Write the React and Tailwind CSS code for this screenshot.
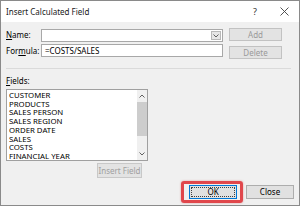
import React from 'react';

const fields = [
  'CUSTOMER',
  'PRODUCTS',
  'SALES PERSON',
  'SALES REGION',
  'ORDER DATE',
  'SALES',
  'COSTS',
  'FINANCIAL YEAR'
];

const Chevron = ({ up }) => (
  <svg width="6" height="4" viewBox="0 0 6 4" className="block">
    <path d={up ? 'M0.5 3.5 L3 1 L5.5 3.5' : 'M0.5 0.5 L3 3 L5.5 0.5'} fill="none" stroke="#606060" strokeWidth="1" />
  </svg>
);

const App = () => {
  return (
    <div
      className="w-[300px] h-[206px] flex flex-col bg-[#f0f0f0] border border-[#8a8a8a] text-[8px] text-black overflow-hidden"
      style={{ fontFamily: '"Noto Sans", "Open Sans", sans-serif' }}
    >
      {/* Title bar */}
      <div className="h-[21px] bg-white flex items-center pl-[5px] pr-[10px]">
        <span className="flex-1 text-[8px] text-[#202020]">Insert Calculated Field</span>
        <span className="w-[10px] text-center text-[9px] mr-[20px] text-[#303030]">?</span>
        <svg width="9" height="9" viewBox="0 0 9 9">
          <path d="M0.5 0.5 L8.5 8.5 M8.5 0.5 L0.5 8.5" stroke="#404040" strokeWidth="0.9" />
        </svg>
      </div>

      {/* Body */}
      <div className="flex-1 flex flex-col px-[5px] pt-[6px]">
        <div className="flex items-start h-[14px]">
          <span className="w-[35px] leading-[14px]">
            <span className="underline">N</span>ame:
          </span>
          <div className="w-[182px] h-[13px] mt-[1px] bg-white border border-[#a8a8a8] flex justify-end p-[1px]">
            <div className="w-[10px] h-full bg-[#e6e6e6] border border-[#b8b8b8] flex items-center justify-center">
              <Chevron />
            </div>
          </div>
          <button className="ml-[6px] w-[53px] h-[13px] bg-[#e3e3e3] border border-[#c2c2c2] text-[#9a9a9a] text-[8px] leading-none">
            Add
          </button>
        </div>
        <div className="flex items-start h-[16px] mt-[2px]">
          <span className="w-[35px] leading-[13px]">
            For<span className="underline">m</span>ula:
          </span>
          <div className="w-[182px] h-[13px] bg-white border border-[#a8a8a8] flex items-center px-[3px]">
            =COSTS/SALES
          </div>
          <button className="ml-[6px] mt-[2px] w-[53px] h-[13px] bg-[#e3e3e3] border border-[#c2c2c2] text-[#9a9a9a] text-[8px] leading-none">
            Delete
          </button>
        </div>

        <div className="mt-[8px] mr-[3px] h-px bg-[#dadada]" />

        <div className="mt-[7px] leading-[10px]">
          <span className="underline">F</span>ields:
        </div>

        <div className="flex">
          <div className="w-[142px] h-[72px] mt-[3px] bg-white border border-[#a0a0a0] flex">
            <div className="flex-1 pl-[2px] pt-[1px]">
              {fields.map((f) => (
                <div key={f} className="leading-[8.7px] text-[7.8px] whitespace-nowrap">
                  {f}
                </div>
              ))}
            </div>
            <div className="w-[10px] bg-[#f0f0f0] flex flex-col items-center">
              <div className="h-[12px] flex items-center">
                <Chevron up />
              </div>
              <div className="w-full h-[34px] bg-[#cdcdcd]" />
              <div className="flex-1 flex items-end pb-[4px]">
                <Chevron />
              </div>
            </div>
          </div>
        </div>

        <div className="flex">
          <button className="ml-[91px] mt-[2px] w-[45px] h-[15px] bg-[#e3e3e3] border border-[#c8c8c8] text-[#a0a0a0] text-[8px] leading-none">
            Insert Field
          </button>
        </div>

        <div className="flex items-center mt-[3px]">
          <div className="ml-[175px] w-[62px] h-[22px] border-[3px] border-[#e0474c] rounded-[3px] shadow-[0_0_2px_rgba(200,60,60,0.5)] flex items-center justify-end pr-[3px] pl-[5px]">
            <button className="w-[48px] h-[14px] bg-[#e1e1e1] border border-[#0078d7] p-[1px] text-[8px] leading-none">
              <div className="w-full h-full border border-dotted border-[#404040] flex items-center justify-center">
                OK
              </div>
            </button>
          </div>
          <button className="ml-[3px] w-[48px] h-[14px] bg-[#e1e1e1] border border-[#adadad] text-[8px] leading-none">
            Close
          </button>
        </div>
      </div>
    </div>
  );
};

export default App;
